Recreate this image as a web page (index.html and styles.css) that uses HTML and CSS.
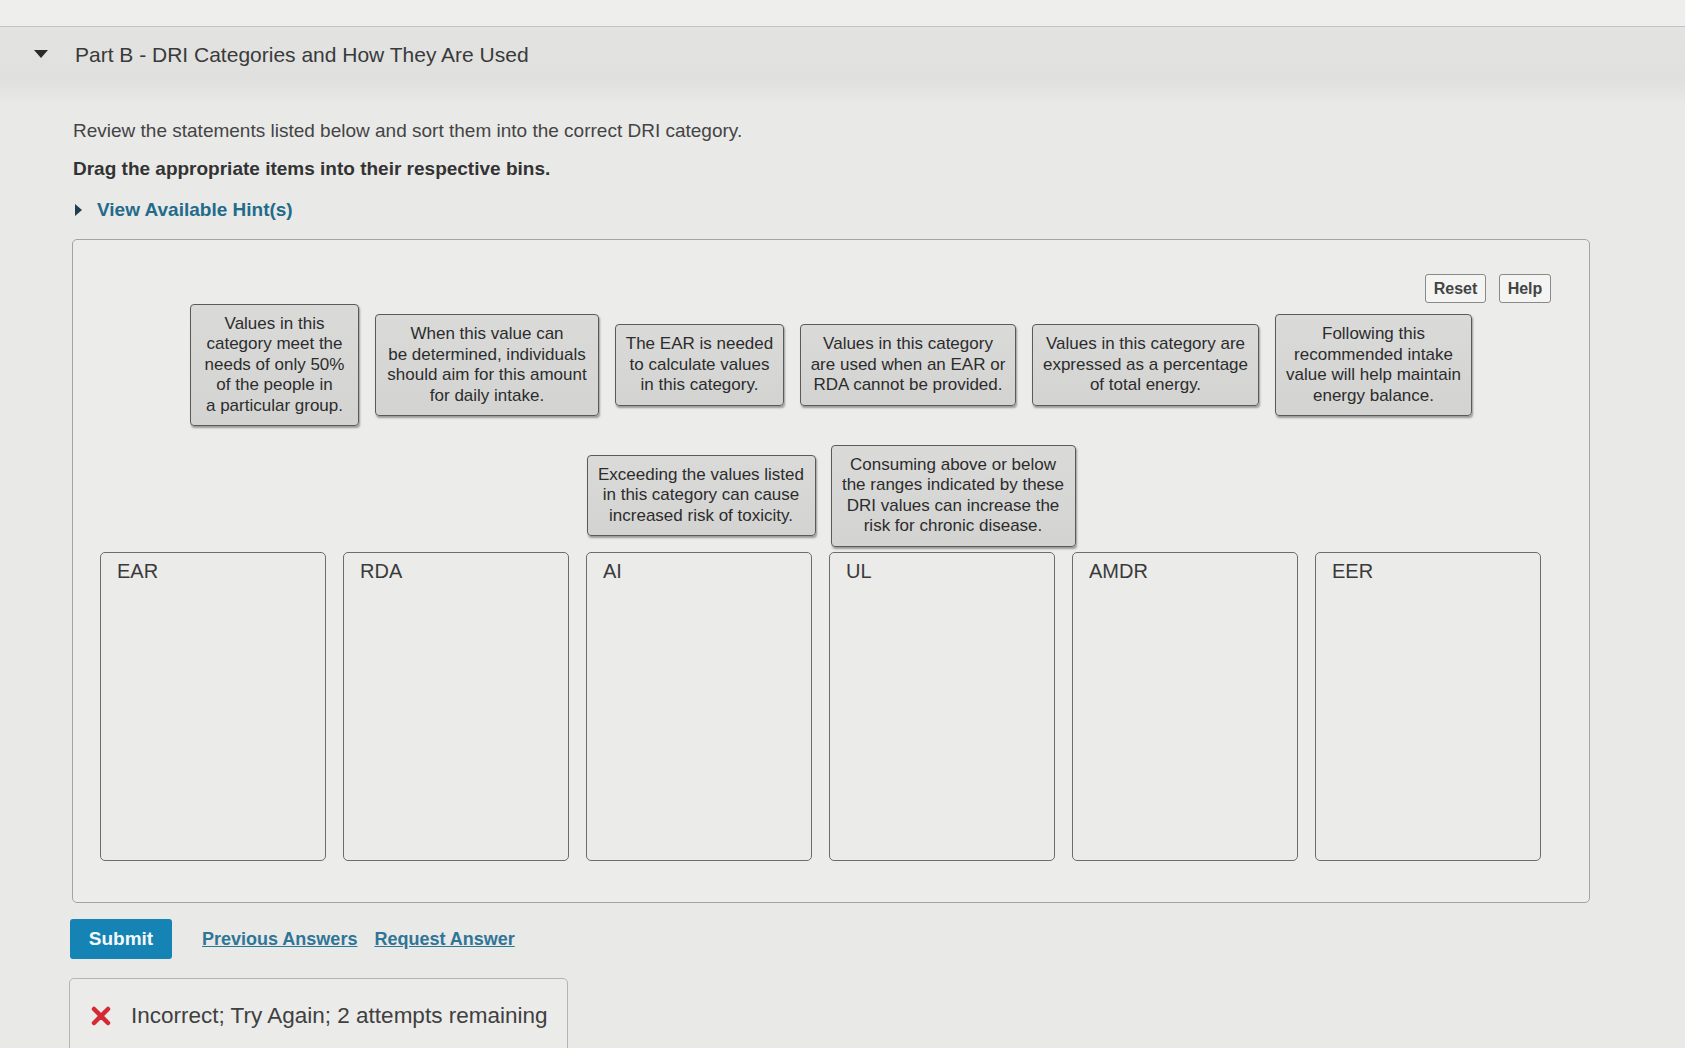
FILE: index.html
```html
<!DOCTYPE html>
<html lang="en">
<head>
<meta charset="utf-8">
<title>Part B - DRI Categories and How They Are Used</title>
<link rel="stylesheet" href="styles.css">
</head>
<body>
<div class="topbar"></div>
<div class="part-header">
  <span class="caret-down"></span>
  <h2 class="part-title">Part B - DRI Categories and How They Are Used</h2>
</div>
<main class="content">
  <p class="instr">Review the statements listed below and sort them into the correct DRI category.</p>
  <p class="instr bold">Drag the appropriate items into their respective bins.</p>
  <div class="hint"><span class="caret-right"></span><span class="hint-text">View Available Hint(s)</span></div>

  <section class="dnd">
    <div class="toolbar">
      <button class="tbtn">Reset</button>
      <button class="tbtn">Help</button>
    </div>
    <div class="cards-row row1">
      <div class="card w1">Values in this<br>category meet the<br>needs of only 50%<br>of the people in<br>a particular group.</div>
      <div class="card w2">When this value can<br>be determined, individuals<br>should aim for this amount<br>for daily intake.</div>
      <div class="card w3">The EAR is needed<br>to calculate values<br>in this category.</div>
      <div class="card w4">Values in this category<br>are used when an EAR or<br>RDA cannot be provided.</div>
      <div class="card w5">Values in this category are<br>expressed as a percentage<br>of total energy.</div>
      <div class="card w6">Following this<br>recommended intake<br>value will help maintain<br>energy balance.</div>
    </div>
    <div class="cards-row row2">
      <div class="card w7">Exceeding the values listed<br>in this category can cause<br>increased risk of toxicity.</div>
      <div class="card w8">Consuming above or below<br>the ranges indicated by these<br>DRI values can increase the<br>risk for chronic disease.</div>
    </div>
    <div class="bins">
      <div class="bin"><span class="bin-label">EAR</span></div>
      <div class="bin"><span class="bin-label">RDA</span></div>
      <div class="bin"><span class="bin-label">AI</span></div>
      <div class="bin"><span class="bin-label">UL</span></div>
      <div class="bin"><span class="bin-label">AMDR</span></div>
      <div class="bin"><span class="bin-label">EER</span></div>
    </div>
  </section>

  <div class="actions">
    <button class="submit">Submit</button>
    <a class="link" href="#">Previous Answers</a>
    <a class="link" href="#">Request Answer</a>
  </div>

  <div class="feedback">
    <svg class="xicon" width="20" height="20" viewBox="0 0 20 20" aria-hidden="true">
      <path d="M3 3 L17 17 M17 3 L3 17" stroke="#d42a33" stroke-width="4.5" stroke-linecap="round"/>
    </svg>
    <span class="fb-text">Incorrect; Try Again; 2 attempts remaining</span>
  </div>
</main>
</body>
</html>
```

FILE: styles.css
```css
* { box-sizing: border-box; }
html, body { margin: 0; padding: 0; }
body {
  background: #e9e9e8;
  font-family: "Liberation Sans", Arial, sans-serif;
  color: #333;
  width: 1685px;
  height: 1048px;
  overflow: hidden;
}
.topbar {
  height: 27px;
  background: #eeeeed;
  border-bottom: 1px solid #c4c4c4;
}
.part-header {
  display: flex;
  align-items: flex-start;
  height: 74px;
  padding: 15px 0 0 34px;
  background: linear-gradient(180deg, #e3e3e2 0%, #e0e0df 70%, #e7e7e6 100%);
}
.caret-down {
  width: 0; height: 0;
  margin-top: 8px;
  border-left: 7px solid transparent;
  border-right: 7px solid transparent;
  border-top: 8px solid #2a2a2a;
}
.part-title {
  margin: 0 0 0 27px;
  font-size: 21px;
  line-height: 25px;
  font-weight: normal;
  color: #3a3a3a;
}
.content {
  padding: 0 0 0 72px;
}
.instr {
  margin: 19px 0 0 1px;
  font-size: 19px;
  line-height: 22px;
  color: #444;
}
.instr.bold { font-weight: bold; color: #333; margin-top: 16px; }
.hint {
  display: flex;
  align-items: center;
  margin-top: 19px;
  height: 22px;
}
.caret-right {
  width: 0; height: 0;
  margin-left: 3px;
  border-top: 6px solid transparent;
  border-bottom: 6px solid transparent;
  border-left: 7px solid #1f3f4f;
}
.hint-text {
  margin-left: 15px;
  font-size: 19px;
  font-weight: bold;
  color: #236b8a;
}
.dnd {
  margin-top: 18px;
  width: 1518px;
  border: 1.5px solid #a4a4a4;
  border-radius: 5px;
  background: #ececeb;
  padding: 34px 38px 41px 27px;
}
.toolbar {
  display: flex;
  justify-content: flex-end;
  gap: 13px;
  height: 29px;
}
.tbtn {
  height: 29px;
  padding: 0 6px;
  background: #f4f4f3;
  border: 1.5px solid #8a8a8a;
  border-radius: 3px;
  font-family: "Liberation Sans", Arial, sans-serif;
  font-size: 16px;
  font-weight: bold;
  color: #444;
}
.tbtn:first-child { width: 61px; }
.tbtn:last-child { width: 52px; }
.cards-row {
  display: flex;
  justify-content: center;
  align-items: center;
  margin-left: -27px;
  margin-right: -38px;
}
.row1 { gap: 16px; height: 124px; }
.row2 { gap: 15px; height: 101px; margin-top: 18px; }
.card {
  flex: none;
  text-align: center;
  white-space: nowrap;
  font-size: 17px;
  line-height: 20.5px;
  color: #2c2c2c;
  padding: 9px 0;
  border: 1.5px solid #5a5a5a;
  border-radius: 4px;
  background: linear-gradient(180deg, #dadad9 0%, #d3d3d2 100%);
  box-shadow: 1px 2px 2px rgba(0,0,0,0.35);
}
.w1 { width: 169px; }
.w2 { width: 224px; }
.w3 { width: 169px; }
.w4 { width: 216px; }
.w5 { width: 227px; }
.w6 { width: 197px; }
.w7 { width: 229px; }
.w8 { width: 245px; }
.bins {
  display: flex;
  gap: 17px;
  margin-top: 6px;
}
.bin {
  width: 226px;
  height: 309px;
  border: 1.5px solid #6d6d6d;
  border-radius: 5px;
  background: #ebebea;
  padding: 7px 0 0 16px;
}
.bin-label {
  font-size: 20px;
  line-height: 22px;
  color: #3a3a3a;
}
.actions {
  display: flex;
  align-items: center;
  margin-top: 16px;
  height: 40px;
}
.submit {
  width: 102px;
  height: 40px;
  border: none;
  border-radius: 3px;
  background: #1583b3;
  color: #f4f8fa;
  font-family: "Liberation Sans", Arial, sans-serif;
  font-size: 19px;
  font-weight: bold;
  margin-left: -2px;
}
.link {
  font-size: 18px;
  font-weight: bold;
  color: #2f7596;
  text-decoration: underline;
  margin-left: 30px;
}
.link + .link { margin-left: 17px; }
.feedback {
  display: flex;
  align-items: center;
  margin-top: 19px;
  margin-left: -3px;
  width: 499px;
  height: 80px;
  padding: 0 0 4px 21px;
  border: 1.5px solid #b5b5b5;
  border-radius: 5px;
  background: #ebebea;
}
.xicon { flex: none; }
.fb-text {
  margin-left: 20px;
  font-size: 22.5px;
  color: #404040;
}
```
